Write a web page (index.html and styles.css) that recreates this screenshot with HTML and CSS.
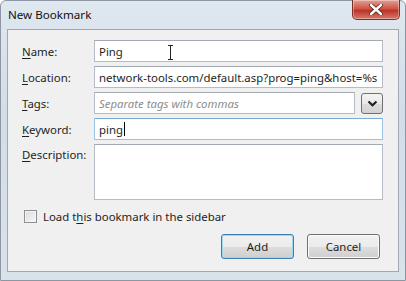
FILE: index.html
```html
<!DOCTYPE html>
<html lang="en">
<head>
  <meta charset="UTF-8" />
  <title>New Bookmark</title>
  <link rel="stylesheet" href="styles.css">
</head>
<body>

<div class="window">
  <div class="titlebar">
    <span class="title">New Bookmark</span>
    <button class="close" aria-label="Close">
      <svg width="14" height="11" viewBox="0 0 14 11">
        <path d="M2 1 L12 10 M12 1 L2 10" stroke="#5a1e18" stroke-width="4" stroke-linecap="round"/>
        <path d="M2 1 L12 10 M12 1 L2 10" stroke="#fff" stroke-width="2.4" stroke-linecap="round"/>
      </svg>
    </button>
  </div>

  <div class="client">
    <div class="form">
      <label><u>N</u>ame:</label>
      <div class="field">
        <input type="text" value="Ping" />
        <span class="ibeam"></span>
      </div>

      <label><u>L</u>ocation:</label>
      <input type="text" value="network-tools.com/default.asp?prog=ping&amp;host=%s" />

      <label><u>T</u>ags:</label>
      <div class="tags-row">
        <input type="text" placeholder="Separate tags with commas" />
        <button class="drop" aria-label="Show all tags">
          <svg width="11" height="7" viewBox="0 0 11 7">
            <path d="M1.5 1.5 L5.5 5.2 L9.5 1.5" fill="none" stroke="#1e1e1e" stroke-width="2.2"/>
          </svg>
        </button>
      </div>

      <label><u>K</u>eyword:</label>
      <div class="field">
        <input type="text" class="focused" value="ping" />
        <span class="caret"></span>
      </div>

      <label class="top"><u>D</u>escription:</label>
      <textarea></textarea>
    </div>

    <div class="check-row">
      <span class="checkbox"></span>
      <span>Load t<u>h</u>is bookmark in the sidebar</span>
    </div>

    <div class="buttons">
      <button class="btn default">Add</button>
      <button class="btn">Cancel</button>
    </div>
  </div>
</div>

</body>
</html>
```

FILE: styles.css
```css
body {
  margin: 0;
  font-family: "Noto Sans", "Open Sans", sans-serif;
  font-size: 11.4px;
  color: #1e1e1e;
}

.window {
  width: 406px;
  height: 281px;
  box-sizing: border-box;
  border: 1px solid #8d97a3;
  border-radius: 6px 6px 0 0;
  background: linear-gradient(#dfe7ef, #d3dde8 40%, #d9e2eb);
  display: flex;
  flex-direction: column;
}

.titlebar {
  height: 28px;
  display: flex;
  justify-content: space-between;
  align-items: flex-start;
}

.title {
  margin: 6px 0 0 7px;
  font-size: 11.6px;
  color: #111;
}

.close {
  width: 48px;
  height: 20px;
  margin: -1px 5px 0 0;
  padding: 0;
  border: 1px solid #7a3029;
  border-top: none;
  border-radius: 0 0 5px 5px;
  background: linear-gradient(#e2a095, #cf5547 45%, #bb3527 55%, #d7786b);
  display: flex;
  align-items: center;
  justify-content: center;
  box-shadow: inset 0 0 0 1px rgba(255,255,255,0.35);
}

.client {
  flex: 1;
  margin: 0 6px 8px 6px;
  border: 1px solid #a1a8b1;
  background: #f0f0f0;
  padding: 10px 15px 12px 14px;
  display: flex;
  flex-direction: column;
}

.form {
  display: grid;
  grid-template-columns: 72px 1fr;
  row-gap: 4px;
  align-items: center;
}

.form label.top {
  align-self: start;
  padding-top: 3px;
}

.form label u,
.check-row u {
  text-decoration-thickness: 1px;
  text-underline-offset: 2px;
}

input,
textarea {
  box-sizing: border-box;
  width: 100%;
  height: 22px;
  margin: 0;
  padding: 0 4px;
  border: 1px solid #b5bcc5;
  border-top-color: #a3a9b1;
  background: #fff;
  font: inherit;
  color: #1e1e1e;
}

input::placeholder {
  color: #8d8d8d;
  font-style: italic;
}

input.focused {
  border-color: #9cc3e5;
  border-top-color: #7fa9d0;
}

textarea {
  height: 56px;
  resize: none;
}

.field {
  position: relative;
}

.ibeam {
  position: absolute;
  left: 76px;
  top: 5px;
  width: 1px;
  height: 15px;
  background: #222;
}

.ibeam::before,
.ibeam::after {
  content: "";
  position: absolute;
  left: -2px;
  width: 5px;
  height: 1px;
  background: #222;
}

.ibeam::before { top: 0; }
.ibeam::after { bottom: 0; }

.caret {
  position: absolute;
  left: 30px;
  top: 4px;
  width: 1px;
  height: 14px;
  background: #000;
}

.tags-row {
  display: flex;
  gap: 6px;
  align-items: center;
}

.drop {
  flex: none;
  width: 22px;
  height: 21px;
  padding: 0;
  border: 1px solid #707070;
  border-radius: 3px;
  background: linear-gradient(#f4f4f4, #e8e8e8 50%, #dcdcdc 51%, #d2d2d2);
  display: flex;
  align-items: center;
  justify-content: center;
}

.check-row {
  margin-top: 9px;
  margin-left: 2px;
  display: flex;
  align-items: center;
  gap: 6px;
  height: 15px;
}

.checkbox {
  width: 11px;
  height: 11px;
  border: 1px solid #8e8f8f;
  background: linear-gradient(135deg, #dcdcdc, #f6f6f6);
  box-shadow: inset 0 0 0 1px #f4f4f4;
}

.buttons {
  margin-top: auto;
  margin-right: 3px;
  display: flex;
  justify-content: flex-end;
  gap: 13px;
}

.btn {
  width: 73px;
  height: 25px;
  padding: 0;
  border: 1px solid #707070;
  border-radius: 3px;
  background: linear-gradient(#f2f2f2, #ebebeb 50%, #dddddd 51%, #cfcfcf);
  font: inherit;
  color: #1e1e1e;
  box-shadow: inset 0 0 0 1px #fbfbfb;
}

.btn.default {
  border-color: #3c7fb1;
  box-shadow: inset 0 0 0 1px #9fd6f0;
}
```
